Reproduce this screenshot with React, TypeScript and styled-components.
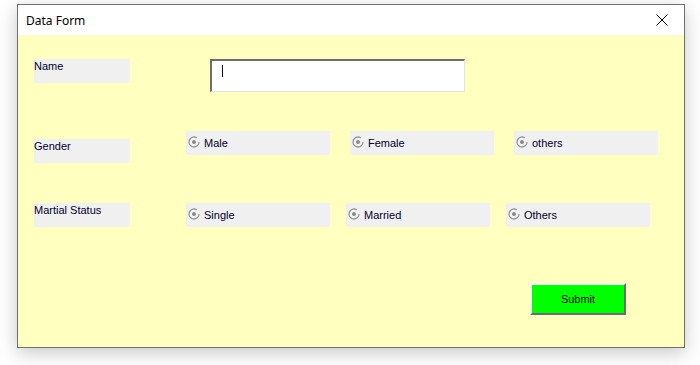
import styled, { createGlobalStyle } from "styled-components";

const GlobalStyle = createGlobalStyle`
  body {
    margin: 0;
    background: #ffffff;
    font-family: "Liberation Sans", Arial, sans-serif;
  }
`;

const Screen = styled.div`
  width: 700px;
  height: 365px;
  padding: 4px 0 0 17px;
  box-sizing: border-box;
`;

const Window = styled.div`
  width: 668px;
  height: 344px;
  border: 1px solid #707070;
  box-sizing: border-box;
  background: #ffffc0;
  display: flex;
  flex-direction: column;
  box-shadow: 0 5px 18px rgba(0, 0, 0, 0.22);
`;

const TitleBar = styled.div`
  height: 30px;
  background: #ffffff;
  display: flex;
  align-items: center;
  justify-content: space-between;
  padding: 0 7px 0 8px;
  font-family: "Noto Sans", "Open Sans", sans-serif;
  font-size: 12px;
  color: #000;
`;

const CloseButton = styled.div`
  width: 30px;
  height: 30px;
  display: flex;
  align-items: center;
  justify-content: center;
`;

const FormBody = styled.div`
  flex: 1;
  display: flex;
  flex-direction: column;
  padding: 24px 0 0 16px;
`;

const Row = styled.div<{ $top?: number }>`
  display: flex;
  align-items: flex-start;
  margin-top: ${(p) => p.$top ?? 0}px;
`;

const FieldLabel = styled.div<{ $top?: number }>`
  width: 96px;
  height: 24px;
  margin-top: ${(p) => p.$top ?? 0}px;
  background: #f0f0f0;
  font-size: 11px;
  color: #00002a;
  line-height: 13px;
  padding-top: 1px;
  box-sizing: border-box;
`;

const TextBox = styled.div`
  width: 255px;
  height: 33px;
  margin-left: 80px;
  background: #fff;
  box-sizing: border-box;
  border-top: 2px solid #6d6d6d;
  border-left: 2px solid #6d6d6d;
  border-right: 1px solid #e3e3e3;
  border-bottom: 1px solid #e3e3e3;
  padding: 4px 0 0 10px;
`;

const Caret = styled.div`
  width: 1px;
  height: 12px;
  background: #000;
`;

const Options = styled.div<{ $gap: number }>`
  display: flex;
  gap: ${(p) => p.$gap}px;
  margin-left: 56px;
`;

const Option = styled.label`
  width: 144px;
  height: 24px;
  background: #f0f0f0;
  display: flex;
  align-items: center;
  gap: 4px;
  padding-left: 2px;
  box-sizing: border-box;
  font-size: 11px;
  color: #00002a;
`;

const RadioMark = styled.svg`
  width: 12px;
  height: 12px;
  margin-top: -3px;
  flex: none;
`;

const SubmitButton = styled.button`
  width: 96px;
  height: 32px;
  margin-left: 496px;
  background: #00ff00;
  border-top: 2px solid #f4f4f4;
  border-left: 2px solid #f4f4f4;
  border-right: 2px solid #6d6d6d;
  border-bottom: 2px solid #6d6d6d;
  font-family: "Liberation Sans", Arial, sans-serif;
  font-size: 11px;
  color: #000;
  padding: 0;
`;

function Radio({ text }: { text: string }) {
  return (
    <Option>
      <RadioMark viewBox="0 0 12 12">
        <circle cx="6" cy="6" r="5" fill="#f4f4f4" stroke="#9a9a9a" strokeWidth="1.3" strokeDasharray="26 5" />
        <circle cx="6" cy="6" r="2" fill="#8a8a8a" />
      </RadioMark>
      {text}
    </Option>
  );
}

export default function App() {
  return (
    <>
      <GlobalStyle />
      <Screen>
        <Window>
          <TitleBar>
            <span>Data Form</span>
            <CloseButton>
              <svg width="12" height="12" viewBox="0 0 12 12">
                <path d="M0.5 0.5 L11.5 11.5 M11.5 0.5 L0.5 11.5" stroke="#000" strokeWidth="1" />
              </svg>
            </CloseButton>
          </TitleBar>
          <FormBody>
            <Row>
              <FieldLabel>Name</FieldLabel>
              <TextBox>
                <Caret />
              </TextBox>
            </Row>
            <Row $top={39}>
              <FieldLabel $top={8}>Gender</FieldLabel>
              <Options $gap={20}>
                <Radio text="Male" />
                <Radio text="Female" />
                <Radio text="others" />
              </Options>
            </Row>
            <Row $top={40}>
              <FieldLabel>Martial Status</FieldLabel>
              <Options $gap={16}>
                <Radio text="Single" />
                <Radio text="Married" />
                <Radio text="Others" />
              </Options>
            </Row>
            <Row $top={56}>
              <SubmitButton>Submit</SubmitButton>
            </Row>
          </FormBody>
        </Window>
      </Screen>
    </>
  );
}
